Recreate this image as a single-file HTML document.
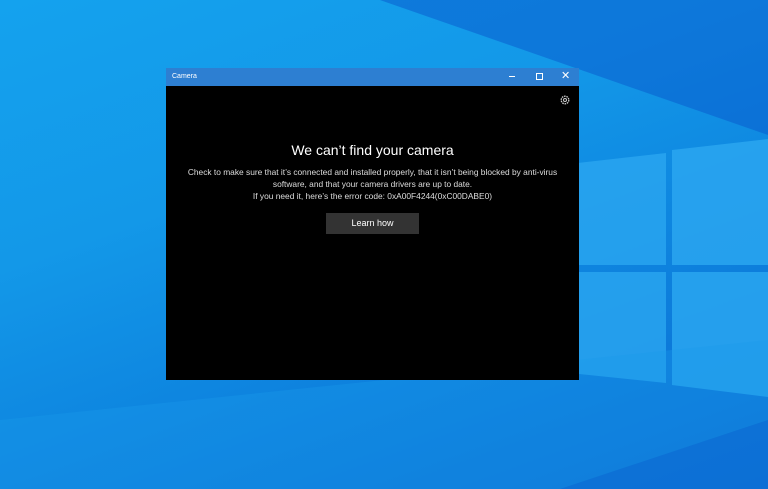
<!DOCTYPE html>
<html><head><meta charset="utf-8"><style>
html,body{margin:0;padding:0;width:768px;height:489px;overflow:hidden;font-family:"Liberation Sans",sans-serif}
.bg{position:absolute;left:0;top:0;width:768px;height:489px;
background:linear-gradient(160deg,#14a2ee 0%,#1398e8 35%,#0e86e0 60%,#0a6ad2 100%)}
.win{position:absolute;left:166px;top:68px;width:413px;height:312px;background:#000}
.tb{position:absolute;left:0;top:0;width:413px;height:18px;background:#2d7fd2;color:#fff;font-size:7px}
.tb span{position:absolute;top:5px}
h1{position:absolute;left:0;width:413px;top:74px;margin:0;text-align:center;color:#fff;font-weight:normal;font-size:14px}
.p{position:absolute;left:0;width:413px;top:98px;text-align:center;color:#ddd;font-size:8.4px;line-height:12px}
.btn{position:absolute;left:160px;top:145px;width:93px;height:21px;background:#333;color:#fff;font-size:9px;text-align:center;line-height:21px}
</style></head><body>
<div class="bg"></div>
<svg width="768" height="489" style="position:absolute;left:0;top:0">
<polygon points="380,0 768,0 768,135" fill="#0a5ccd" opacity="0.55"/>
<polygon points="560,165 666,153 666,265 560,265" fill="#2aa6f0" opacity="0.8"/>
<polygon points="672,150 768,139 768,265 672,265" fill="#2aa6f0" opacity="0.85"/>
<polygon points="560,272 666,272 666,383 560,372" fill="#2aa6f0" opacity="0.8"/>
<polygon points="672,272 768,272 768,397 672,385" fill="#2aa6f0" opacity="0.85"/>
<polygon points="0,420 768,340 768,489 0,489" fill="#1a9aea" opacity="0.35"/>
<polygon points="768,420 768,489 560,489" fill="#0a63cf" opacity="0.5"/>
</svg>
<div class="win">
<div class="tb"><span style="left:6px">Camera</span>
<span style="left:343px;top:8px;width:6px;height:1px;background:#fff"></span>
<span style="left:370px;top:5px;width:5px;height:5px;border:1px solid #fff"></span>
<span style="left:395px;top:1px;font-size:11px">✕</span></div>
<svg style="position:absolute;left:394px;top:27px" width="10" height="10" viewBox="0 0 10 10"><circle cx="5" cy="5" r="3.8" fill="none" stroke="#ccc" stroke-width="1.3" stroke-dasharray="1.6 0.8"/><circle cx="5" cy="5" r="1.5" fill="none" stroke="#ccc"/></svg>
<h1>We can’t find your camera</h1>
<div class="p">Check to make sure that it’s connected and installed properly, that it isn’t being blocked by anti-virus<br>software, and that your camera drivers are up to date.<br>If you need it, here’s the error code: 0xA00F4244(0xC00DABE0)</div>
<div class="btn">Learn how</div>
</div>
</body></html>
